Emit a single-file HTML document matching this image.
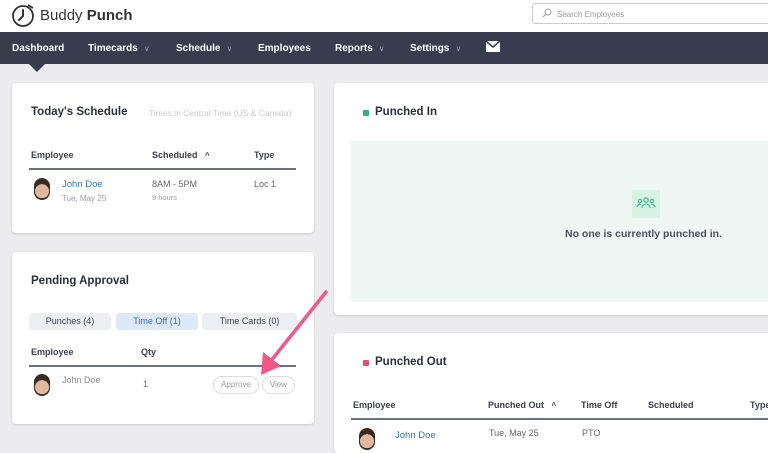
<!DOCTYPE html><html><head><style>
*{box-sizing:border-box;margin:0;padding:0}
body{width:768px;height:439px;overflow:hidden;background:#ececef;font-family:"Liberation Sans",sans-serif;position:relative;color:#2a2f3a}
.top{position:absolute;left:0;top:0;width:768px;height:32px;background:#fff}
.nav{position:absolute;left:0;top:32px;width:768px;height:32px;background:#373d4d;color:#fff;font-size:10px;font-weight:bold}
.nav span{position:absolute;top:11px}
.nav i{font-style:normal;color:#9aa0ad;font-size:8px;margin-left:6px;font-weight:normal}
.card{position:absolute;background:#fff;border-radius:4px;box-shadow:0 1px 2px rgba(0,0,0,.15)}
.a{position:absolute;white-space:nowrap}
.h{font-size:11.5px;font-weight:bold}
.th{font-size:9px;font-weight:bold;color:#3a3f4c}
.line{position:absolute;height:2px;background:#6b7080}
.blue{color:#2a73c0}
.gray{color:#9a9ea6}
.av{position:absolute;width:16px;height:22px;border-radius:8px;background:radial-gradient(circle at 50% 60%,#e0b8a0 0 45%,#3a2a20 46%)}
.tab{position:absolute;top:61px;height:17px;border-radius:4px;background:#eceef1;font-size:9px;color:#3a3f4c;text-align:center;line-height:17px}
.btn{position:absolute;height:18px;border:1px solid #ddd;border-radius:9px;font-size:8px;color:#999;text-align:center;line-height:16px}
</style></head><body>
<div class="top">
<svg style="position:absolute;left:11px;top:3px" width="26" height="24" viewBox="0 0 26 24"><circle cx="12" cy="13" r="10" fill="none" stroke="#333" stroke-width="1.8"/><path d="M12 13 L8 17 M12 13 L12 7" stroke="#333" stroke-width="2" fill="none" stroke-linecap="round"/><path d="M17 2 L22 5" stroke="#333" stroke-width="1.8"/></svg>
<div class="a" style="left:40px;top:7px;font-size:15px;color:#333">Buddy <b>Punch</b></div>
<div class="a" style="left:532px;top:3px;width:240px;height:21px;border:1px solid #ccc;border-radius:3px;font-size:8px;color:#999;padding:6px 0 0 24px">Search Employees</div>
<svg style="position:absolute;left:542px;top:8px" width="10" height="10"><circle cx="6" cy="4" r="3" fill="none" stroke="#999"/><path d="M4 6L1 9" stroke="#999"/></svg>
</div>
<div class="nav">
<span style="left:12px">Dashboard</span>
<span style="left:88px">Timecards<i>∨</i></span>
<span style="left:176px">Schedule<i>∨</i></span>
<span style="left:258px">Employees</span>
<span style="left:335px">Reports<i>∨</i></span>
<span style="left:410px">Settings<i>∨</i></span>
<svg style="position:absolute;left:486px;top:9px" width="14" height="11"><rect width="14" height="11" fill="#fff"/><path d="M0 0L7 6L14 0" stroke="#373d4d" stroke-width="1.5" fill="none"/></svg>
</div>
<div style="position:absolute;left:29px;top:64px;width:0;height:0;border-left:8px solid transparent;border-right:8px solid transparent;border-top:8px solid #373d4d"></div>

<div class="card" style="left:12px;top:83px;width:302px;height:150px">
<div class="a h" style="left:19px;top:23px">Today's Schedule</div>
<div class="a" style="left:137px;top:25px;font-size:8.5px;color:#c8cad0">Times in Central Time (US &amp; Canada)</div>
<div class="a th" style="left:19px;top:67px">Employee</div>
<div class="a th" style="left:140px;top:67px">Scheduled &nbsp;&nbsp;<span style="font-size:8px">^</span></div>
<div class="a th" style="left:242px;top:67px">Type</div>
<div class="line" style="left:17px;top:85px;width:267px"></div>
<div class="av" style="left:22px;top:95px"></div>
<div class="a blue" style="left:50px;top:96px;font-size:9.5px">John Doe</div>
<div class="a gray" style="left:50px;top:111px;font-size:8px">Tue, May 25</div>
<div class="a" style="left:140px;top:96px;font-size:9px;color:#666">8AM - 5PM</div>
<div class="a gray" style="left:140px;top:110px;font-size:7.5px">9 hours</div>
<div class="a" style="left:242px;top:96px;font-size:9px;color:#666">Loc 1</div>
</div>

<div class="card" style="left:12px;top:252px;width:302px;height:172px">
<div class="a h" style="left:19px;top:23px">Pending Approval</div>
<div class="tab" style="left:17px;width:82px">Punches (4)</div>
<div class="tab" style="left:104px;width:82px;background:#dde8f8;color:#2a73c0">Time Off (1)</div>
<div class="tab" style="left:190px;width:95px">Time Cards (0)</div>
<div class="a th" style="left:19px;top:95px">Employee</div>
<div class="a th" style="left:129px;top:95px">Qty</div>
<div class="line" style="left:17px;top:113px;width:267px"></div>
<div class="av" style="left:22px;top:122px"></div>
<div class="a" style="left:50px;top:123px;font-size:9px;color:#888">John Doe</div>
<div class="a" style="left:131px;top:127px;font-size:9px;color:#666">1</div>
<div class="btn" style="left:201px;top:124px;width:46px">Approve</div>
<div class="btn" style="left:250px;top:124px;width:33px">View</div>
</div>

<div class="card" style="left:334px;top:83px;width:440px;height:232px">
<div class="a" style="left:29px;top:27px;width:6px;height:6px;background:#2fb27b;border-radius:1px"></div>
<div class="a h" style="left:41px;top:23px">Punched In</div>
<div class="a" style="left:17px;top:58px;width:430px;height:161px;background:#eef7f4"></div>
<div class="a" style="left:298px;top:107px;width:28px;height:28px;background:#d8f1e5"></div>
<svg style="position:absolute;left:302px;top:112px" width="20" height="16" viewBox="0 0 20 16" fill="none" stroke="#3fb688" stroke-width="1.1"><circle cx="10" cy="5" r="2.2"/><circle cx="4" cy="6" r="1.7"/><circle cx="16" cy="6" r="1.7"/><path d="M6 13a4 4 0 0 1 8 0M1 12a3 3 0 0 1 4-2.5M19 12a3 3 0 0 0-4-2.5"/></svg>
<div class="a" style="left:231px;top:145px;font-size:10.5px;font-weight:bold;color:#4a4f5c">No one is currently punched in.</div>
</div>

<div class="card" style="left:334px;top:333px;width:440px;height:120px">
<div class="a" style="left:29px;top:27px;width:6px;height:6px;background:#ee4a77;border-radius:1px"></div>
<div class="a h" style="left:41px;top:23px">Punched Out</div>
<div class="a th" style="left:19px;top:67px">Employee</div>
<div class="a th" style="left:154px;top:67px">Punched Out &nbsp;&nbsp;<span style="font-size:8px">^</span></div>
<div class="a th" style="left:247px;top:67px">Time Off</div>
<div class="a th" style="left:314px;top:67px">Scheduled</div>
<div class="a th" style="left:416px;top:67px">Type</div>
<div class="line" style="left:17px;top:85px;width:430px"></div>
<div class="av" style="left:25px;top:95px"></div>
<div class="a blue" style="left:61px;top:97px;font-size:9.5px">John Doe</div>
<div class="a" style="left:155px;top:95px;font-size:9px;color:#666">Tue, May 25</div>
<div class="a" style="left:248px;top:95px;font-size:9px;color:#666">PTO</div>
</div>

<svg style="position:absolute;left:0;top:0" width="768" height="439"><path d="M326 292 L270 362" stroke="#f0588a" stroke-width="3.5" stroke-linecap="round"/><path d="M261 375 L263 352 L281 366 Z" fill="#f0588a"/></svg>
</body></html>
